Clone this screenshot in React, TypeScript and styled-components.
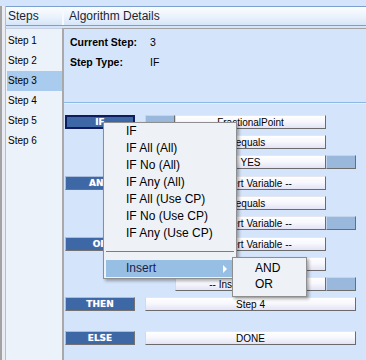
import React from "react";
import styled, { createGlobalStyle } from "styled-components";

const GlobalStyle = createGlobalStyle`
  html, body {
    margin: 0;
    padding: 0;
  }
  body {
    font-family: "Liberation Sans", Arial, sans-serif;
    background: #d4e4fa;
  }
  * {
    box-sizing: border-box;
  }
`;

const Frame = styled.div`
  position: relative;
  width: 366px;
  height: 360px;
  overflow: hidden;
  display: flex;
  padding-top: 6px;
  background: #d4e4fa;
`;

const Gutter = styled.div`
  flex: none;
  width: 6px;
  background: #e9edf3;
  border-left: 2px solid #a3a3a3;
  border-right: 1px solid #bdbdbd;
`;

const Pane = styled.div<{ $width?: number }>`
  display: flex;
  flex-direction: column;
  flex: ${(p) => (p.$width ? "none" : "1")};
  width: ${(p) => (p.$width ? `${p.$width}px` : "auto")};
`;

const PaneHeader = styled.div<{ $indent: number }>`
  flex: none;
  height: 20px;
  display: flex;
  align-items: center;
  padding-left: ${(p) => p.$indent}px;
  border-top: 1px solid #7b9fd0;
  border-bottom: 1px solid #7b9fd0;
  background: linear-gradient(#fbfdff, #eaf2fc 55%, #d6e5f8);
  font-size: 12px;
  color: #1b2535;
`;

const PaneDivider = styled.div`
  flex: none;
  width: 2px;
  background: linear-gradient(
    #7b9fd0 0 1px,
    #f6f9fe 1px 19px,
    #7b9fd0 19px 20px,
    #d4e4fa 20px 22px,
    #a9a9a9 22px
  );
`;

const StepList = styled.div`
  flex: 1;
  margin-top: 2px;
  padding-top: 2px;
  border-top: 1px solid #c6d2e2;
  background: #ecf2fa;
`;

const StepItem = styled.div<{ $selected?: boolean }>`
  height: 20px;
  line-height: 20px;
  margin-left: 1px;
  padding-left: 1px;
  font-size: 10px;
  color: #000;
  background: ${(p) => (p.$selected ? "#a9cbee" : "transparent")};
`;

const DetailsBody = styled.div`
  flex: 1;
  display: flex;
  flex-direction: column;
  margin-top: 2px;
  border-top: 1px solid #a2a2a2;
`;

const InfoBlock = styled.div`
  flex: none;
  height: 74px;
  padding: 3px 0 0 6px;
  border-bottom: 1px solid #8cb8e6;
  box-shadow: 0 1px 0 #e6f0fc;
`;

const InfoRow = styled.div`
  display: flex;
  align-items: center;
  height: 20px;
  font-size: 10.5px;
  color: #000;
`;

const InfoLabel = styled.span`
  width: 80px;
  font-weight: bold;
`;

const RulesArea = styled.div`
  display: flex;
  flex-direction: column;
  padding: 12px 0 0 1px;
`;

const Clause = styled.div<{ $rows: number; $space: number }>`
  display: grid;
  grid-template-columns: 80px 30px 151px 30px;
  grid-template-rows: repeat(${(p) => p.$rows}, 14px);
  row-gap: 6px;
  margin-top: ${(p) => p.$space}px;
`;

const OpButton = styled.div<{ $focused?: boolean }>`
  grid-column: 1;
  grid-row: 1;
  width: 70px;
  height: 14px;
  display: flex;
  align-items: center;
  justify-content: center;
  background: #3e67a6;
  border: ${(p) => (p.$focused ? "2px solid #0e1b5e" : "1px solid")};
  border-color: ${(p) =>
    p.$focused ? "#0e1b5e" : "#a8bcdb #727272 #727272 #a8bcdb"};
  font-family: "DejaVu Sans", Verdana, sans-serif;
  font-weight: bold;
  font-size: 9px;
  color: #fff;
  text-shadow: 0 0 1px #9fb4d6;
`;

const Field = styled.div<{ $row: number; $wide?: boolean }>`
  grid-row: ${(p) => p.$row};
  grid-column: ${(p) => (p.$wide ? "2 / 5" : "3")};
  height: 14px;
  display: flex;
  align-items: center;
  justify-content: center;
  background: linear-gradient(#ffffff, #f6f6fd 50%, #e3e3f5);
  border: 1px solid;
  border-color: #e6e6ee #6b6b6b #6b6b6b #d8d8e2;
  font-size: 10px;
  color: #000;
  white-space: nowrap;
`;

const Square = styled.div<{ $row: number; $col: number }>`
  grid-row: ${(p) => p.$row};
  grid-column: ${(p) => p.$col};
  height: 14px;
  background: #9ab8dc;
  border: 1px solid;
  border-color: #c2d5ec #6d6d6d #6d6d6d #c2d5ec;
`;

const Menu = styled.div<{ $left: number; $top: number; $width: number }>`
  position: absolute;
  left: ${(p) => p.$left}px;
  top: ${(p) => p.$top}px;
  width: ${(p) => p.$width}px;
  background: #eef2f7;
  border: 1px solid #8e8e8e;
  box-shadow: 2px 2px 3px rgba(0, 0, 0, 0.32);
`;

const MainMenu = styled(Menu)`
  padding: 0 2px 1px;
`;

const SubMenu = styled(Menu)`
  padding: 2px 2px 4px;
`;

const MenuItem = styled.div<{ $active?: boolean; $height: number }>`
  position: relative;
  height: ${(p) => p.$height}px;
  line-height: ${(p) => p.$height}px;
  padding-left: 20px;
  font-size: 12px;
  color: ${(p) => (p.$active ? "#1a1d4e" : "#000")};
  background: ${(p) => (p.$active ? "#97bfe4" : "transparent")};
`;

const SubArrow = styled.span`
  position: absolute;
  right: 7px;
  top: 5px;
  width: 0;
  height: 0;
  border-left: 4px solid #ffffff;
  border-top: 4px solid transparent;
  border-bottom: 4px solid transparent;
`;

const MenuSeparator = styled.div`
  height: 18px;
  padding-top: 9px;
  &::after {
    content: "";
    display: block;
    border-top: 1px solid #7d7d7d;
  }
`;

const steps = ["Step 1", "Step 2", "Step 3", "Step 4", "Step 5", "Step 6"];

const ifOptions = [
  "IF",
  "IF All (All)",
  "IF No (All)",
  "IF Any (All)",
  "IF All (Use CP)",
  "IF No (Use CP)",
  "IF Any (Use CP)",
];

type Condition = { op: string; focused?: boolean; space: number; rows: string[] };

const conditions: Condition[] = [
  { op: "IF", focused: true, space: 0, rows: ["FractionalPoint", "equals", "YES"] },
  {
    op: "AND",
    space: 7,
    rows: ["-- Insert Variable --", "equals", "-- Insert Variable --"],
  },
  {
    op: "OR",
    space: 7,
    rows: ["-- Insert Variable --", "equals", "-- Insert Variable --"],
  },
];

export default function App() {
  return (
    <>
      <GlobalStyle />
      <Frame>
        <Gutter />
        <Pane $width={56}>
          <PaneHeader $indent={2}>Steps</PaneHeader>
          <StepList>
            {steps.map((s) => (
              <StepItem key={s} $selected={s === "Step 3"}>
                {s}
              </StepItem>
            ))}
          </StepList>
        </Pane>
        <PaneDivider />
        <Pane>
          <PaneHeader $indent={5}>Algorithm Details</PaneHeader>
          <DetailsBody>
            <InfoBlock>
              <InfoRow>
                <InfoLabel>Current Step:</InfoLabel>
                <span>3</span>
              </InfoRow>
              <InfoRow>
                <InfoLabel>Step Type:</InfoLabel>
                <span>IF</span>
              </InfoRow>
            </InfoBlock>
            <RulesArea>
              {conditions.map((c) => (
                <Clause key={c.op} $rows={3} $space={c.space}>
                  <OpButton $focused={c.focused}>{c.op}</OpButton>
                  <Square $row={1} $col={2} />
                  {c.rows.map((r, i) => (
                    <Field key={i} $row={i + 1}>
                      {r}
                    </Field>
                  ))}
                  <Square $row={3} $col={4} />
                </Clause>
              ))}
              <Clause $rows={1} $space={6}>
                <OpButton>THEN</OpButton>
                <Field $row={1} $wide>
                  Step 4
                </Field>
              </Clause>
              <Clause $rows={1} $space={20}>
                <OpButton>ELSE</OpButton>
                <Field $row={1} $wide>
                  DONE
                </Field>
              </Clause>
            </RulesArea>
          </DetailsBody>
        </Pane>

        <MainMenu $left={103} $top={122} $width={134}>
          {ifOptions.map((o) => (
            <MenuItem key={o} $height={17}>
              {o}
            </MenuItem>
          ))}
          <MenuSeparator />
          <MenuItem $active $height={17}>
            Insert
            <SubArrow />
          </MenuItem>
        </MainMenu>
        <SubMenu $left={232} $top={257} $width={75}>
          <MenuItem $height={16}>AND</MenuItem>
          <MenuItem $height={16}>OR</MenuItem>
        </SubMenu>
      </Frame>
    </>
  );
}
